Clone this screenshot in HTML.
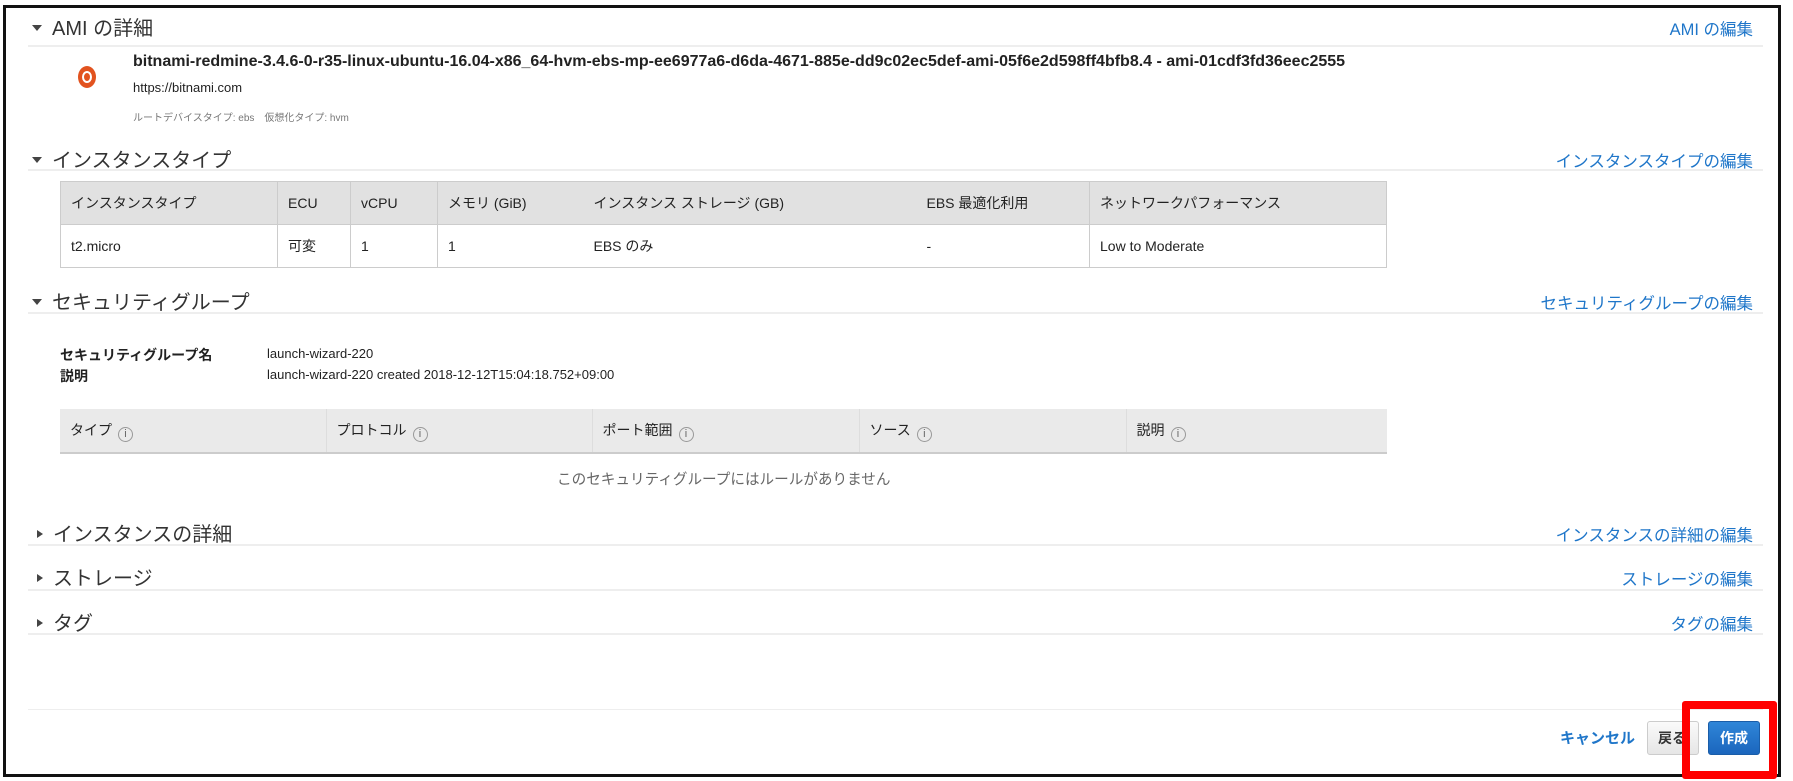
<!DOCTYPE html>
<html><head><meta charset="utf-8"><style>
*{margin:0;padding:0;box-sizing:border-box}
body{width:1793px;height:781px;background:#fff;font-family:"Liberation Sans","Noto Sans CJK JP",sans-serif;color:#222;position:relative;overflow:hidden;font-size:13px}
.a{position:absolute;white-space:nowrap}
.frame{position:absolute;left:3px;top:5px;width:1778px;height:772px;border:3px solid #111}
.h{position:absolute;left:32px;font-size:20px;color:#333}
.h .t{display:inline-block;width:0;height:0;border-left:5px solid transparent;border-right:5px solid transparent;border-top:6px solid #444;margin-right:10px;vertical-align:4px}
.h .r{display:inline-block;width:0;height:0;border-top:4px solid transparent;border-bottom:4px solid transparent;border-left:6px solid #444;margin-right:10px;margin-left:5px;vertical-align:3px}
.ln{position:absolute;left:28px;width:1735px;height:2px;background:#eee}
.lk{position:absolute;right:40px;color:#1f76c9;font-size:16.5px}
table{position:absolute;left:60px;border-collapse:collapse;font-size:14px}
td{border:1px solid #ccc;padding:0 10px}
.hd td{background:#e1e1e1}
.i{display:inline-block;width:15px;height:15px;border:1px solid #999;border-radius:50%;font-size:11px;line-height:13px;text-align:center;color:#666;margin-left:6px;vertical-align:-2px}
</style></head><body>
<div class="frame"></div>

<div class="h" style="top:12px"><span class="t"></span>AMI の詳細</div>
<div class="lk" style="top:16px">AMI の編集</div>
<div class="ln" style="top:45px"></div>
<div class="a" style="left:78px;top:66px;width:18px;height:22px;border-radius:50%;background:#e2531f"></div>
<div class="a" style="left:82px;top:71px;width:10px;height:12px;border-radius:50%;border:2px solid #fff"></div>
<div class="a" style="left:133px;top:53px;font-size:16px;font-weight:bold">bitnami-redmine-3.4.6-0-r35-linux-ubuntu-16.04-x86_64-hvm-ebs-mp-ee6977a6-d6da-4671-885e-dd9c02ec5def-ami-05f6e2d598ff4bfb8.4 - ami-01cdf3fd36eec2555</div>
<div class="a" style="left:133px;top:80px;font-size:13px">https://bitnami.com</div>
<div class="a" style="left:133px;top:109px;font-size:10px;color:#777">ルートデバイスタイプ: ebs　仮想化タイプ: hvm</div>

<div class="h" style="top:144px"><span class="t"></span>インスタンスタイプ</div>
<div class="lk" style="top:148px">インスタンスタイプの編集</div>
<div class="ln" style="top:169px"></div>
<table style="top:181px;width:1327px">
<tr class="hd" style="height:43px"><td style="width:217px">インスタンスタイプ</td><td style="width:73px">ECU</td><td style="width:87px">vCPU</td><td style="width:146px;border-right:none">メモリ (GiB)</td><td style="width:333px;border-left:none;border-right:none">インスタンス ストレージ (GB)</td><td style="width:173px;border-left:none">EBS 最適化利用</td><td>ネットワークパフォーマンス</td></tr>
<tr style="height:43px"><td>t2.micro</td><td>可変</td><td>1</td><td style="border-right:none">1</td><td style="border-left:none;border-right:none">EBS のみ</td><td style="border-left:none">-</td><td>Low to Moderate</td></tr>
</table>

<div class="h" style="top:286px"><span class="t"></span>セキュリティグループ</div>
<div class="lk" style="top:290px">セキュリティグループの編集</div>
<div class="ln" style="top:312px"></div>
<div class="a" style="left:60px;top:345px;font-size:14px;font-weight:bold">セキュリティグループ名</div>
<div class="a" style="left:267px;top:346px;font-size:13px">launch-wizard-220</div>
<div class="a" style="left:60px;top:366px;font-size:14px;font-weight:bold">説明</div>
<div class="a" style="left:267px;top:367px;font-size:13px">launch-wizard-220 created 2018-12-12T15:04:18.752+09:00</div>
<table style="top:409px;width:1327px">
<tr class="hd" style="height:44px"><td style="width:266px;background:#eaeaea;border:none;border-bottom:2px solid #ccc">タイプ<span class="i">i</span></td><td style="width:266px;background:#eaeaea;border:none;border-left:1px solid #ddd;border-bottom:2px solid #ccc">プロトコル<span class="i">i</span></td><td style="width:267px;background:#eaeaea;border:none;border-left:1px solid #ddd;border-bottom:2px solid #ccc">ポート範囲<span class="i">i</span></td><td style="width:267px;background:#eaeaea;border:none;border-left:1px solid #ddd;border-bottom:2px solid #ccc">ソース<span class="i">i</span></td><td style="background:#eaeaea;border:none;border-left:1px solid #ddd;border-bottom:2px solid #ccc">説明<span class="i">i</span></td></tr>
</table>
<div class="a" style="left:557px;top:468px;font-size:14.6px;color:#666">このセキュリティグループにはルールがありません</div>

<div class="h" style="top:518px"><span class="r"></span>インスタンスの詳細</div>
<div class="lk" style="top:522px">インスタンスの詳細の編集</div>
<div class="ln" style="top:544px"></div>
<div class="h" style="top:562px"><span class="r"></span>ストレージ</div>
<div class="lk" style="top:566px">ストレージの編集</div>
<div class="ln" style="top:589px"></div>
<div class="h" style="top:607px"><span class="r"></span>タグ</div>
<div class="lk" style="top:611px">タグの編集</div>
<div class="ln" style="top:633px"></div>

<div class="ln" style="top:709px;height:1px"></div>
<div class="a" style="left:1560px;top:727px;color:#1f76c9;font-size:15px;font-weight:bold">キャンセル</div>
<div class="a" style="left:1647px;top:721px;width:52px;height:34px;border:1px solid #ccc;border-radius:3px;background:linear-gradient(#fafafa,#e6e6e6);font-size:14px;line-height:32px;padding-left:10px;font-weight:bold;color:#333">戻る</div>
<div class="a" style="left:1708px;top:721px;width:52px;height:34px;border:1px solid #1a5da8;border-radius:3px;background:linear-gradient(#2f86d8,#1b66bd);font-size:14px;line-height:32px;text-align:center;font-weight:bold;color:#fff">作成</div>
<div class="a" style="left:1682px;top:701px;width:95px;height:78px;border:8px solid #ff0000;border-radius:3px"></div>
</body></html>
